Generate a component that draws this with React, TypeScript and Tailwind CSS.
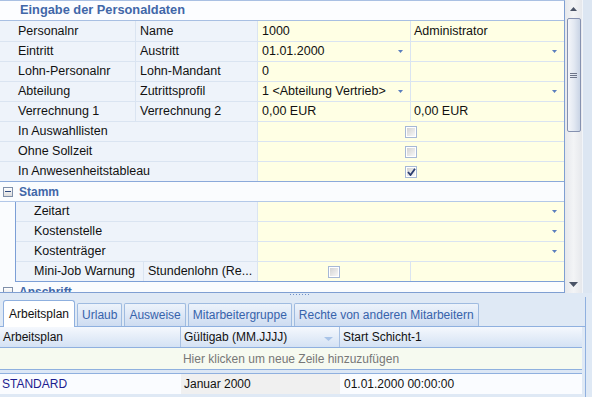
import type { ReactNode } from 'react'

const rowLine = 'border-b border-[#dae4f1]'
const labelBg = 'bg-[#eef3fa]'
const valueBg = 'bg-[#ffffe4]'

function DropArrow() {
  return (
    <svg width="5" height="3" viewBox="0 0 5 3" className="shrink-0">
      <path d="M0 0h5L2.5 3z" fill="#5b7ebd" />
    </svg>
  )
}

function CheckBox({ checked }: { checked?: boolean }) {
  return (
    <span className="flex h-3 w-3 items-center justify-center border border-[#a6b8d6] bg-white p-px">
      <span className="relative flex h-full w-full items-center justify-center bg-gradient-to-br from-[#d3d3d3] to-[#f7f7f7]">
        {checked && (
          <svg width="9" height="8" viewBox="0 0 9 8" className="absolute">
            <path d="M1 4l2.5 3L8 0.8" stroke="#2b3d70" strokeWidth="1.8" fill="none" />
          </svg>
        )}
      </span>
    </span>
  )
}

function MinusBox() {
  return (
    <span className="flex h-[10px] w-[10px] items-center justify-center border border-[#7f8fa9] bg-gradient-to-b from-white to-[#dcdcdc]">
      <span className="h-px w-[6px] bg-[#2e4a80]" />
    </span>
  )
}

function Cell({ w, bg, children, pl = 'pl-1', last }: { w: string; bg: string; children?: ReactNode; pl?: string; last?: boolean }) {
  return (
    <div className={`flex h-full shrink-0 items-center ${w} ${bg} ${pl} ${last ? '' : 'border-r border-[#dae4f1]'}`}>
      {children}
    </div>
  )
}

function FourRow({ a, b, c, d, cArrow, dArrow, first }: { a: string; b: string; c?: string; d?: string; cArrow?: boolean; dArrow?: boolean; first?: boolean }) {
  return (
    <div className={`flex shrink-0 ${first ? 'h-[21px]' : 'h-5'} ${rowLine}`}>
      <Cell w="w-[136px]" bg={labelBg} pl="pl-[18px]">{a}</Cell>
      <Cell w="w-[122px]" bg={labelBg}>{b}</Cell>
      <Cell w="w-[153px]" bg={valueBg}>
        <span className="flex-1 whitespace-nowrap">{c}</span>
        {cArrow && <span className="pr-[7px]"><DropArrow /></span>}
      </Cell>
      <Cell w="w-[153px]" bg={valueBg} pl="pl-[3px]" last>
        <span className="flex-1 whitespace-nowrap">{d}</span>
        {dArrow && <span className="pr-[7px]"><DropArrow /></span>}
      </Cell>
    </div>
  )
}

function CheckRow({ label, checked, blue }: { label: string; checked?: boolean; blue?: boolean }) {
  return (
    <div className={`flex h-5 shrink-0 border-b ${blue ? 'border-[#8aa9da]' : 'border-[#dae4f1]'}`}>
      <Cell w="w-[258px]" bg={labelBg} pl="pl-[18px]">{label}</Cell>
      <div className={`flex h-full flex-1 items-center justify-center ${valueBg}`}>
        <CheckBox checked={checked} />
      </div>
    </div>
  )
}

function GroupRow({ title, line }: { title: string; line?: boolean }) {
  return (
    <div className={`flex h-5 shrink-0 items-center gap-[6px] bg-[#fafcfe] pl-[3px] ${line ? 'border-b border-[#b3c8e8]' : ''}`}>
      <MinusBox />
      <span className="text-[12px] font-bold text-[#4167a8]">{title}</span>
    </div>
  )
}

function NestedRow({ label }: { label: string }) {
  return (
    <div className={`flex h-5 ${rowLine}`}>
      <Cell w="w-[242px]" bg={labelBg} pl="pl-[18px]">{label}</Cell>
      <div className={`flex h-full flex-1 items-center justify-end pr-[7px] ${valueBg}`}>
        <DropArrow />
      </div>
    </div>
  )
}

function Scrollbar() {
  return (
    <div className="flex h-full w-[17px] flex-col items-center bg-gradient-to-r from-[#e6e8ec] via-[#f3f4f6] to-[#e6e8ec]">
      <svg width="7" height="4" viewBox="0 0 7 4" className="mt-[7px]">
        <path d="M0 4h7L3.5 0z" fill="#4a5366" />
      </svg>
      <div className="mt-[7px] flex h-[114px] w-[14px] items-center justify-center rounded-[2px] border border-[#8591b0] bg-gradient-to-r from-[#f4f6fa] via-[#e3e9f2] to-[#c9d4e5]">
        <div className="flex flex-col gap-[1px]">
          <span className="h-px w-[7px] bg-[#6d7589]" />
          <span className="h-px w-[7px] bg-[#6d7589]" />
          <span className="h-px w-[7px] bg-[#6d7589]" />
        </div>
      </div>
      <div className="flex-1" />
      <svg width="9" height="5" viewBox="0 0 9 5" className="mb-[6px]">
        <path d="M0 0h9L4.5 5z" fill="#4a5366" />
      </svg>
    </div>
  )
}

function Tab({ label, active }: { label: string; active?: boolean }) {
  if (active) {
    return (
      <div className="-mb-px flex h-[27px] items-center rounded-t-[3px] border border-b-0 border-[#8fb0df] bg-white px-[5px] text-[#111]">
        {label}
      </div>
    )
  }
  return (
    <div className="flex h-[23px] items-center rounded-t-[2px] border border-b-0 border-[#9fbbe0] bg-gradient-to-b from-[#edf3fb] to-[#cedcf1] px-[4px] text-[#3763ab]">
      {label}
    </div>
  )
}

export default function App() {
  return (
    <div className="h-[397px] w-[592px] overflow-hidden bg-[#dfe9f5] font-['Liberation_Sans',Arial,sans-serif] text-[12px] leading-none text-[#111]">
      <div className="flex h-[293px]">
        <div className="flex w-[565px] flex-col overflow-hidden border-y border-r border-t-[#a9c0e3] border-b-[#7f9fd2] border-r-[#7f9fd2] bg-[#fafcfe] text-[12.5px]">
          <div className="flex h-5 shrink-0 items-center border-b border-[#a8bfe2] bg-[#fcfdff] pl-5 text-[12.8px] font-bold text-[#4167a8]">
            Eingabe der Personaldaten
          </div>
          <FourRow first a="Personalnr" b="Name" c="1000" d="Administrator" />
          <FourRow a="Eintritt" b="Austritt" c="01.01.2000" cArrow dArrow />
          <FourRow a="Lohn-Personalnr" b="Lohn-Mandant" c="0" />
          <FourRow a="Abteilung" b="Zutrittsprofil" c="1 <Abteilung Vertrieb>" cArrow dArrow />
          <FourRow a="Verrechnung 1" b="Verrechnung 2" c="0,00 EUR" d="0,00 EUR" />
          <CheckRow label="In Auswahllisten" />
          <CheckRow label="Ohne Sollzeit" />
          <CheckRow label="In Anwesenheitstableau" checked blue />
          <GroupRow title="Stamm" line />
          <div className="ml-[15px] shrink-0 border-b border-l border-[#7c9fd6]">
            <NestedRow label="Zeitart" />
            <NestedRow label="Kostenstelle" />
            <NestedRow label="Kostenträger" />
            <div className="flex h-[19px]">
              <Cell w="w-[128px]" bg={labelBg} pl="pl-[18px]">Mini-Job Warnung</Cell>
              <Cell w="w-[114px]" bg={labelBg}>Stundenlohn (Re...</Cell>
              <div className={`flex h-full w-[153px] items-center justify-center border-r border-[#dae4f1] ${valueBg}`}>
                <CheckBox />
              </div>
              <div className={`h-full flex-1 ${valueBg}`} />
            </div>
          </div>
          <GroupRow title="Anschrift" />
        </div>
        <Scrollbar />
        <div className="h-full flex-1 border-l border-[#f2f5f9] bg-[#dce6f2]" />
      </div>

      <div className="flex h-[4px] items-start justify-center pl-[6px]">
        <div className="mt-px flex gap-[2px]">
          {Array.from({ length: 7 }).map((_, i) => (
            <span key={i} className="h-px w-px bg-[#6d8fc8]" />
          ))}
        </div>
      </div>

      <div className="h-[100px] w-[586px] border-r border-[#8fb0df]">
        <div className="flex h-[30px] items-end gap-[2px] border-b border-[#8fb0df] pl-[3px]">
          <Tab label="Arbeitsplan" active />
          <Tab label="Urlaub" />
          <Tab label="Ausweise" />
          <Tab label="Mitarbeitergruppe" />
          <Tab label="Rechte von anderen Mitarbeitern" />
        </div>
        <div className="w-[582px]">
          <div className="flex h-[21px] border-b border-[#8fb0df] bg-gradient-to-b from-[#f5f8fd] to-[#d4e2f4]">
            <div className="flex w-[181px] items-center border-r border-[#a8c1e3] pl-[3px]">Arbeitsplan</div>
            <div className="flex w-[159px] items-center border-r border-[#a8c1e3] pl-[3px]">
              <span className="flex-1">Gültigab (MM.JJJJ)</span>
              <svg width="9" height="4" viewBox="0 0 9 4" className="mr-[6px] mt-[4px]">
                <path d="M0 0h9L4.5 4z" fill="#a9c4e8" />
              </svg>
            </div>
            <div className="flex flex-1 items-center pl-[3px]">Start Schicht-1</div>
          </div>
          <div className="flex h-[22px] items-center justify-center border-b border-[#8fb0df] bg-[#f6faf0] text-[#777]">
            Hier klicken um neue Zeile hinzuzufügen
          </div>
          <div className="h-[4px] border-b border-[#8fb0df] bg-[#dce7f5]" />
          <div className="flex h-5 bg-[#fafcff]">
            <div className="flex w-[181px] items-center pl-[2px] text-[#1d1d8f]">STANDARD</div>
            <div className="flex w-[159px] items-center bg-[#f0f0f0] pl-[3px]">Januar 2000</div>
            <div className="flex flex-1 items-center pl-[4px]">01.01.2000 00:00:00</div>
          </div>
        </div>
      </div>
    </div>
  )
}
